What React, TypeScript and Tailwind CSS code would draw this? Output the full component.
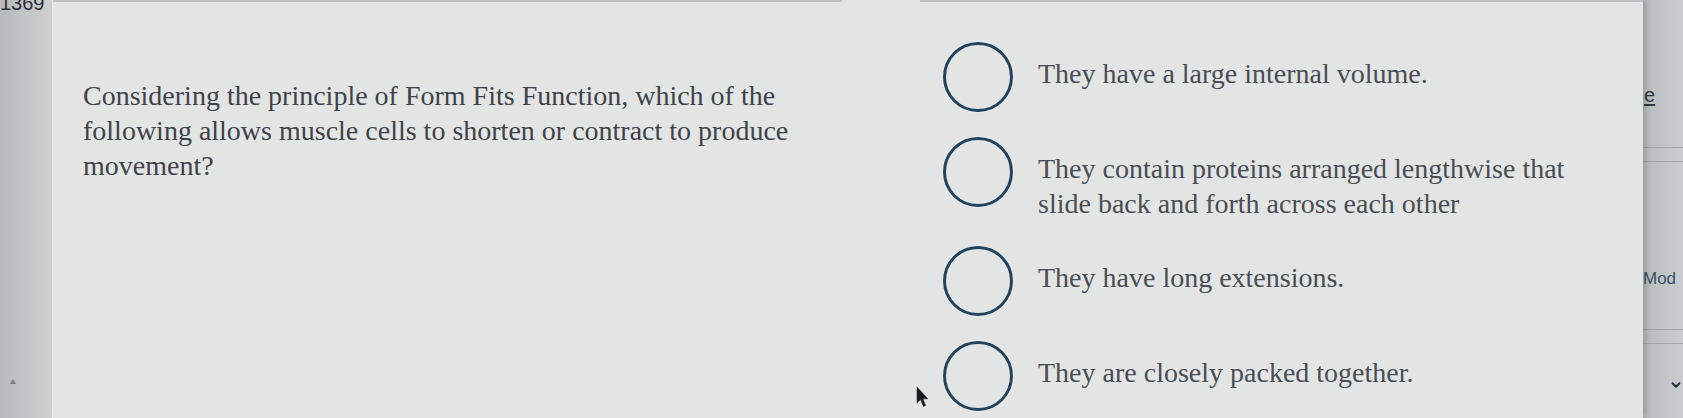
import { ChevronDown } from "lucide-react";

const OPTIONS = [
  "They have a large internal volume.",
  "They contain proteins arranged lengthwise that slide back and forth across each other",
  "They have long extensions.",
  "They are closely packed together.",
];

function Cursor() {
  return (
    <svg
      className="absolute left-[863px] top-[386px]"
      width="13"
      height="22"
      viewBox="0 0 13 22"
    >
      <path d="M1 1 L1 17 L4.6 13.6 L7.4 20.4 L9.6 19.5 L6.9 12.8 L11.8 12.8 Z" fill="#16181b" stroke="#2a2c30" strokeWidth="0.6" />
    </svg>
  );
}

function Radio({ label }: { label: string }) {
  return (
    <label className="flex items-start">
      <span className="h-[70px] w-[70px] shrink-0 rounded-full border-[3.5px] border-[#21435e] shadow-[0_0_2px_rgba(255,255,255,0.9)]" />
      <span className="ml-[25px] max-w-[575px] pt-[14px] text-[28px] leading-[35px] text-[#4a4d52]">
        {label}
      </span>
    </label>
  );
}

export default function App() {
  return (
    <div className="flex h-[418px] w-[1683px] overflow-hidden bg-[#c5c8c9] font-['Liberation_Serif',serif]">
      {/* left window strip */}
      <div className="flex w-[53px] shrink-0 flex-col border-r border-[#eceeed] bg-linear-to-r from-[#b7b9ba] to-[#cfd1d1] font-['Liberation_Sans',sans-serif]">
        <div className="-mt-[7px] text-[20px] leading-[20px] text-[#2b3034]">1369</div>
        <div className="ml-[10px] mt-[366px] h-0 w-0 border-x-[3px] border-b-[5px] border-x-transparent border-b-[#7a7d80]" />
      </div>

      {/* question panel */}
      <div className="relative z-10 flex flex-1 bg-[#e3e5e4] shadow-[3px_0_6px_rgba(0,0,0,0.18)]">
        <div className="w-[789px] shrink-0 border-t-2 border-[#bfc2c2] pl-[30px] pt-[76px]">
          <p className="w-[760px] text-[28px] leading-[35px] text-[#3f4247]">
            Considering the principle of Form Fits Function, which of the following allows muscle cells
            to shorten or contract to produce movement?
          </p>
        </div>
        <div className="ml-[78px] flex flex-1 flex-col gap-[25px] border-t-2 border-[#bfc2c2] pl-[23px] pt-[40px]">
          {OPTIONS.map((o) => (
            <Radio key={o} label={o} />
          ))}
        </div>
        <Cursor />
      </div>

      {/* right window strip */}
      <div className="flex w-[40px] shrink-0 flex-col overflow-hidden bg-linear-to-r from-[#b8bbbc] to-[#cbcecf] font-['Liberation_Sans',sans-serif]">
        <div className="mt-[83px] pl-[1px] text-[20px] leading-[24px] text-[#2e3a46] underline underline-offset-2">e</div>
        <div className="mt-[40px] h-px bg-[#a3a6a7]" />
        <div className="mt-[13px] h-px bg-[#a3a6a7]" />
        <div className="mt-[106px] whitespace-nowrap text-[17px] leading-[22px] text-[#37536a]">Mod</div>
        <div className="mt-[39px] h-px bg-[#a3a6a7]" />
        <div className="mt-[13px] h-px bg-[#a3a6a7]" />
        <ChevronDown className="ml-[26px] mt-[34px] shrink-0 text-[#1f2a3a]" size={14} strokeWidth={3.5} />
      </div>
    </div>
  );
}
